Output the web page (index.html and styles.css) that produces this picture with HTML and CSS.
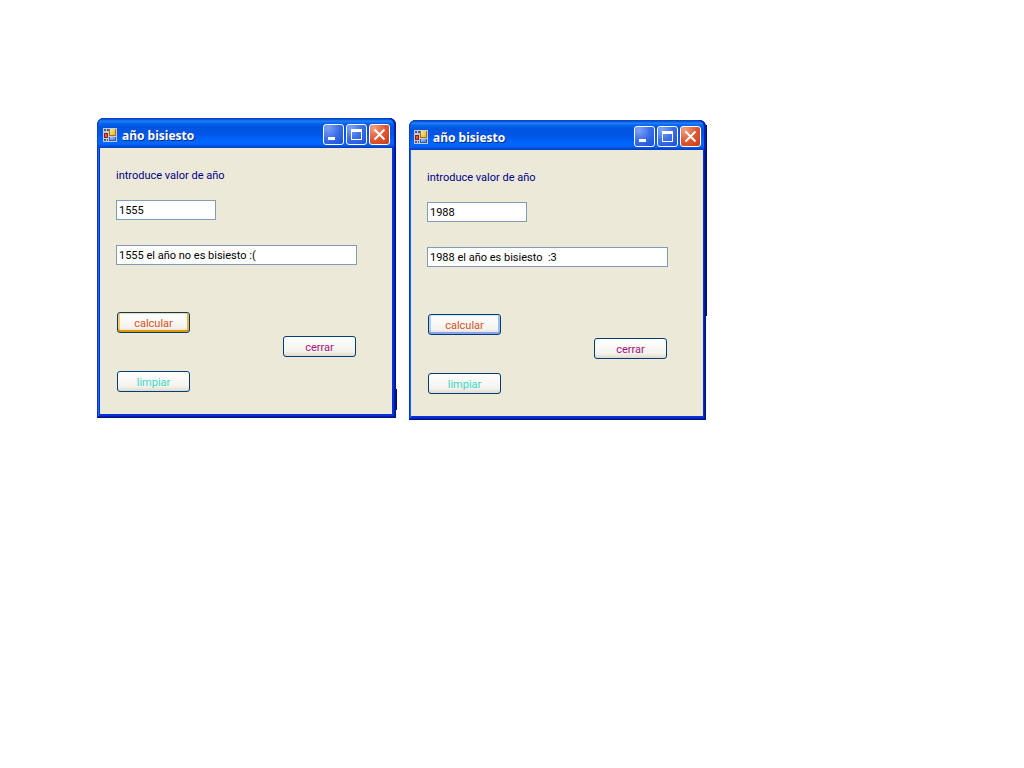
FILE: index.html
```html
<!DOCTYPE html>
<html lang="es">
<head>
<meta charset="utf-8">
<title>año bisiesto</title>
<link rel="stylesheet" href="styles.css">
</head>
<body>
<svg width="0" height="0" class="defs" aria-hidden="true">
  <defs>
    <linearGradient id="gold" x1="0" y1="0" x2="1" y2="1"><stop offset="0" stop-color="#ffeb9a"/><stop offset="1" stop-color="#eeb111"/></linearGradient>
    <linearGradient id="sky" x1="0" y1="0" x2="1" y2="1"><stop offset="0" stop-color="#a9c9f5"/><stop offset="1" stop-color="#477fd9"/></linearGradient>
    <symbol id="app" viewBox="0 0 14 14">
      <path fill="#c3ccd6" d="M0 0h14v14H0z"/>
      <path fill="#3d5a9a" d="M1 1h2v2H1zM4 1h2v2H4zM1 11h2v2H1zM4 11h1v2H4z"/>
      <path fill="#981c16" d="M1 5h4v5H1z"/><path fill="#e95238" d="M2 6h2v3H2z"/>
      <path fill="#9b7622" d="M6 1h7v7H6z"/><path fill="url(#gold)" d="M7 1h5v6H7z"/>
      <path fill="#345ca4" d="M6 9h7v4H6z"/><path fill="url(#sky)" d="M7 9h5v3H7z"/>
    </symbol>
  </defs>
</svg>
<main class="desktop">
  <section class="window first">
    <header class="titlebar">
      <svg class="app-icon" aria-hidden="true"><use href="#app"/></svg>
      <h1 class="title">año bisiesto</h1>
      <div class="controls">
        <button class="control" type="button" aria-label="Minimizar"><svg viewBox="0 0 19 19"><path fill="#fff" d="M4 12h7v3H4z"/></svg></button>
        <button class="control" type="button" aria-label="Maximizar"><svg viewBox="0 0 19 19"><path fill="#fff" fill-rule="evenodd" d="M4 4h11v11H4zM5 7v7h9V7z"/></svg></button>
        <button class="control close" type="button" aria-label="Cerrar ventana"><svg viewBox="0 0 19 19"><path stroke="#fff" stroke-width="2" d="M4.500 4.500l10 10M14.500 4.500l-10 10"/></svg></button>
      </div>
    </header>
    <form class="client">
      <label class="prompt" for="year-a">introduce valor de año</label>
      <input class="field year" id="year-a" type="text" value="1555">
      <input class="field result" type="text" aria-label="resultado" value="1555 el año no es bisiesto :(" readonly>
      <div class="actions">
        <div class="stack">
          <button class="button calc hot" type="button">calcular</button>
          <button class="button clear" type="button">limpiar</button>
        </div>
        <button class="button exit" type="button">cerrar</button>
      </div>
    </form>
  </section>
  <section class="window second">
    <header class="titlebar">
      <svg class="app-icon" aria-hidden="true"><use href="#app"/></svg>
      <h1 class="title">año bisiesto</h1>
      <div class="controls">
        <button class="control" type="button" aria-label="Minimizar"><svg viewBox="0 0 19 19"><path fill="#fff" d="M4 12h7v3H4z"/></svg></button>
        <button class="control" type="button" aria-label="Maximizar"><svg viewBox="0 0 19 19"><path fill="#fff" fill-rule="evenodd" d="M4 4h11v11H4zM5 7v7h9V7z"/></svg></button>
        <button class="control close" type="button" aria-label="Cerrar ventana"><svg viewBox="0 0 19 19"><path stroke="#fff" stroke-width="2" d="M4.500 4.500l10 10M14.500 4.500l-10 10"/></svg></button>
      </div>
    </header>
    <form class="client">
      <label class="prompt" for="year-b">introduce valor de año</label>
      <input class="field year" id="year-b" type="text" value="1988">
      <input class="field result" type="text" aria-label="resultado" value="1988 el año es bisiesto  :3" readonly>
      <div class="actions">
        <div class="stack">
          <button class="button calc focused" type="button">calcular</button>
          <button class="button clear" type="button">limpiar</button>
        </div>
        <button class="button exit" type="button">cerrar</button>
      </div>
    </form>
  </section>
</main>
</body>
</html>
```
FILE: styles.css
```css
* { box-sizing: border-box; }
body {
  margin: 0;
  background: #fff;
  font: 11px/14px Roboto, "Liberation Sans", sans-serif;
}
.defs { position: absolute; }
.desktop {
  display: flex;
  align-items: flex-start;
  gap: 13px;
  padding: 118px 24px 24px 97px;
}
.window {
  position: relative;
  flex: 0 1 299px;
  border-radius: 7px 7px 0 0;
  background: #0831d9;
  box-shadow: inset -1px -1px #00138c, inset 1px 0 #0831d9, inset -2px -2px #001ea0, inset 2px 0 #166aee;
  padding: 0 4px 4px 3px;
}
.second { flex-basis: 297px; margin-top: 2px; padding: 0 3px 4px 2px; }
.window::after {
  content: "";
  position: absolute;
  left: 100%;
  width: 1px;
  background: #001070;
}
.first::after { top: 271px; height: 21px; }
.second::after { top: 5px; height: 191px; }
.titlebar {
  display: flex;
  align-items: center;
  height: 30px;
  margin: 0 -4px 0 -3px;
  padding: 3px 6px 0;
  border-radius: 7px 7px 0 0;
  background: linear-gradient(#0842b5 0, #0a5be8 2px, #2585fa 3px, #0866ee 5px, #0054e0 9px, #0056e6 16px, #0064fb 22px, #0066ff 26px, #0050dc 28px, #003fc4 30px);
  box-shadow: inset -2px 0 #0020a8, inset 1px 0 #0842c9;
}
.second .titlebar { margin: 0 -3px 0 -2px; padding: 3px 5px 0; }
.app-icon { width: 14px; height: 14px; flex: none; }
.title {
  flex: 1;
  margin: 0 0 0 5px;
  padding-top: 2px;
  color: #fff;
  font: bold 12px/16px "Noto Sans", sans-serif;
  text-shadow: 1px 1px #0a2a8a;
}
.controls { display: flex; gap: 2px; }
.control {
  width: 21px;
  height: 21px;
  padding: 0;
  border: 1px solid #fff;
  border-radius: 3px;
  background: radial-gradient(circle at 20% 15%, #7fa4f4, #3c6eea 50%, #1b4fd3);
}
.control svg { display: block; width: 19px; height: 19px; }
.control.close { background: radial-gradient(circle at 20% 15%, #f0a080, #e05a35 50%, #c63c13); }
.client {
  display: flex;
  flex-direction: column;
  align-items: flex-start;
  padding: 21px 35px 22px 16px;
  background: #ece9d8;
  box-shadow: inset 1px 0 #dfe8f0;
}
.prompt { color: #00008b; }
.field {
  height: 20px;
  padding: 1px 2px 0;
  border: 1px solid #7f9db9;
  border-radius: 0;
  background: #fff;
  color: #000;
  font: inherit;
  white-space: pre;
}
.year { width: 100px; margin-top: 17px; }
.result { width: 100%; margin-top: 25px; }
.actions {
  display: flex;
  justify-content: space-between;
  width: 100%;
  margin-top: 47px;
  padding: 0 1px;
}
.stack { display: flex; flex-direction: column; gap: 38px; }
.button {
  width: 73px;
  height: 21px;
  padding: 2px 0 0;
  border: 1px solid #003c74;
  border-radius: 3px;
  background: linear-gradient(#fff, #f4f3ee 75%, #dedacb);
  font: inherit;
}
.calc { color: #d9501e; }
.clear { color: #40d6c4; }
.exit { margin-top: 24px; color: #a8107c; }
.hot { box-shadow: inset 0 1px #fdd889, inset 0 -2px #e59700, inset 2px 0 #fbc761, inset -2px 0 #f3b13a; }
.focused { box-shadow: inset 0 1px #cee7ff, inset 0 -2px #8ba3ee, inset 2px 0 #b3ccf7, inset -2px 0 #a0bbf2; }
```
